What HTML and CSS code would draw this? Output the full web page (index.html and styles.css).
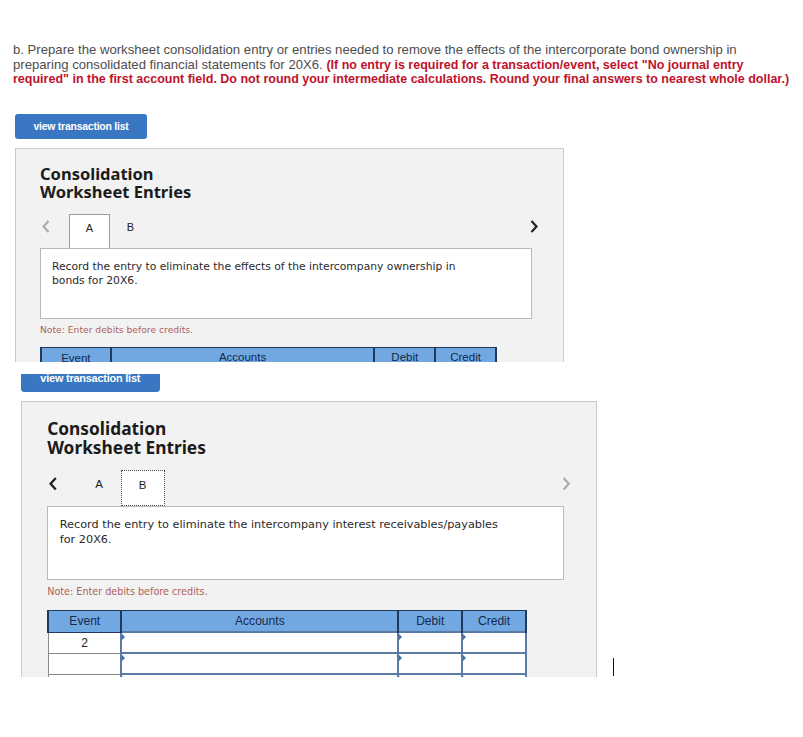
FILE: index.html
```html
<!DOCTYPE html>
<html lang="en">
<head>
  <meta charset="UTF-8" />
  <title>Consolidation Worksheet Entries</title>
  <link rel="stylesheet" href="styles.css">
</head>
<body>

<!-- first capture: entry A -->
<div class="shot shot-first">
  <div class="page page-first">
    <p class="prompt">b. Prepare the worksheet consolidation entry or entries needed to remove the effects of the intercorporate bond ownership in<br>preparing consolidated financial statements for 20X6. <strong class="warn">(If no entry is required for a transaction/event, select "No journal entry<br>required" in the first account field. Do not round your intermediate calculations. Round your final answers to nearest whole dollar.)</strong></p>

    <button class="btn-list">view transaction list</button>

    <section class="panel">
      <h2 class="panel-title">Consolidation<br>Worksheet Entries</h2>
      <div class="tabs">
        <span class="nav nav-prev is-off"><svg width="8" height="13" viewBox="0 0 8 13"><polyline points="6.5,1 1.5,6.5 6.5,12" /></svg></span>
        <span class="tab is-active">A</span>
        <span class="tab">B</span>
        <span class="nav nav-next"><svg width="8" height="13" viewBox="0 0 8 13"><polyline points="1.5,1 6.5,6.5 1.5,12" /></svg></span>
      </div>
      <div class="task">Record the entry to eliminate the effects of the intercompany ownership in<br>bonds for 20X6.</div>
      <p class="note">Note: Enter debits before credits.</p>
      <table class="journal">
        <thead>
          <tr><th class="col-event">Event</th><th class="col-acc">Accounts</th><th class="col-num">Debit</th><th class="col-num">Credit</th></tr>
        </thead>
        <tbody>
          <tr><td>1</td><td class="cell-in"></td><td class="cell-in"></td><td class="cell-in"></td></tr>
          <tr><td></td><td class="cell-in"></td><td class="cell-in"></td><td class="cell-in"></td></tr>
        </tbody>
      </table>
    </section>
  </div>
</div>

<!-- second capture: entry B -->
<div class="shot shot-second">
  <div class="page page-second">
    <button class="btn-list">view transaction list</button>

    <section class="panel">
      <h2 class="panel-title">Consolidation<br>Worksheet Entries</h2>
      <div class="tabs">
        <span class="nav nav-prev"><svg width="8" height="13" viewBox="0 0 8 13"><polyline points="6.5,1 1.5,6.5 6.5,12" /></svg></span>
        <span class="tab">A</span>
        <span class="tab is-focus">B</span>
        <span class="nav nav-next is-off"><svg width="8" height="13" viewBox="0 0 8 13"><polyline points="1.5,1 6.5,6.5 1.5,12" /></svg></span>
      </div>
      <div class="task">Record the entry to eliminate the intercompany interest receivables/payables<br>for 20X6.</div>
      <p class="note">Note: Enter debits before credits.</p>
      <table class="journal">
        <thead>
          <tr><th class="col-event">Event</th><th class="col-acc">Accounts</th><th class="col-num">Debit</th><th class="col-num">Credit</th></tr>
        </thead>
        <tbody>
          <tr><td>2</td><td class="cell-in"></td><td class="cell-in"></td><td class="cell-in"></td></tr>
          <tr><td></td><td class="cell-in"></td><td class="cell-in"></td><td class="cell-in"></td></tr>
          <tr><td></td><td class="cell-in"></td><td class="cell-in"></td><td class="cell-in"></td></tr>
        </tbody>
      </table>
    </section>
  </div>
  <span class="caret"></span>
</div>

</body>
</html>
```

FILE: styles.css
```css
*, *::before, *::after { margin: 0; padding: 0; box-sizing: border-box; }
body {
  background: #fff;
  font-family: 'Liberation Sans', Arial, sans-serif;
  color: #222;
}

.shot {
  overflow: hidden;
  position: relative;
}
.shot-first { height: 362px; }
.shot-second {
  height: 303px;
  margin-top: 12px;
}

.page-first { padding-top: 43px; }
.page-second {
  zoom: 1.05;
  margin-top: -8.3px;
  padding-left: 5px;
}
.page-second .btn-list { margin-top: 0; }

.prompt {
  margin-left: 13px;
  font-size: 13.15px;
  line-height: 14.5px;
  color: #4d4d4d;
  white-space: nowrap;
}
.warn {
  font-size: 12.5px;
  color: #c0122c;
}

.btn-list {
  display: block;
  margin: 27px 0 0 15px;
  width: 132px;
  height: 25px;
  border: none;
  border-radius: 3px;
  background: #3a77c2;
  color: #fff;
  font-family: 'Liberation Sans', Arial, sans-serif;
  font-weight: bold;
  font-size: 10.4px;
  letter-spacing: -0.2px;
}

.panel {
  width: 549px;
  margin: 9px 0 0 15px;
  padding: 16px 0 40px 24px;
  background: #f2f2f2;
  border: 1px solid #c9c9c9;
}
.panel-title {
  font-family: 'Noto Sans', sans-serif;
  font-size: 16.5px;
  line-height: 18px;
  font-weight: bold;
  color: #1b1b1b;
}

.tabs {
  display: flex;
  width: 500px;
  height: 34px;
  margin-top: 13px;
}
.nav {
  margin-top: 6px;
  height: 13px;
}
.nav svg { display: block; }
.nav polyline {
  fill: none;
  stroke: #222;
  stroke-width: 2.2;
}
.nav.is-off polyline { stroke: #a9a9a9; stroke-width: 2; }
.nav-prev {
  width: 29px;
  padding-left: 2px;
}
.nav-next { margin-left: auto; margin-right: 2px; }

.tab {
  width: 41px;
  padding-top: 6px;
  text-align: center;
  font-size: 11px;
  line-height: 14px;
  color: #222;
}
.tab.is-active {
  background: #fff;
  border: 1px solid #9c9c9c;
  border-bottom: none;
}
.tab.is-focus {
  width: 42px;
  background: #fff;
  border: 1px dotted #4a4a4a;
}

.task {
  width: 492px;
  height: 71px;
  padding: 11px 11px 10px;
  background: #fff;
  border: 1px solid #b9b9b9;
  font-family: 'DejaVu Sans', Verdana, sans-serif;
  font-size: 10.75px;
  line-height: 14px;
  color: #2a2a2a;
}

.note {
  margin-top: 5px;
  font-family: 'DejaVu Sans', Verdana, sans-serif;
  font-size: 9.2px;
  line-height: 11px;
  color: #b0615a;
}

.journal {
  margin-top: 12px;
  width: 457px;
  border-collapse: collapse;
  font-size: 11.5px;
  color: #222;
}
.journal th {
  height: 21px;
  background: #72a8e2;
  color: #14284a;
  font-weight: normal;
  border: 1px solid #22395a;
  border-left-width: 2px;
  border-right-width: 2px;
}
.col-event { width: 70px; }
.col-acc { width: 265px; }
.col-num { width: 61px; }
.journal td {
  height: 20px;
  background: #fff;
  border: 1px solid #8a8a8a;
  text-align: center;
}
.journal td.cell-in {
  position: relative;
  border: 2px solid #5a7ba5;
}
.journal td.cell-in::before {
  content: "";
  position: absolute;
  left: 0;
  top: 1px;
  border-left: 3px solid #3b6db5;
  border-top: 3px solid transparent;
  border-bottom: 3px solid transparent;
}

.caret {
  position: absolute;
  left: 613px;
  top: 284px;
  width: 1px;
  height: 18px;
  background: #111;
}
```
